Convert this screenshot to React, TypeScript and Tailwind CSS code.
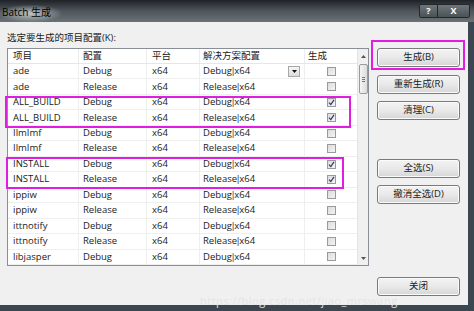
import React from 'react'

type Row = { name: string; config: string; checked: boolean }

const rows: Row[] = [
  { name: 'ade', config: 'Debug', checked: false },
  { name: 'ade', config: 'Release', checked: false },
  { name: 'ALL_BUILD', config: 'Debug', checked: true },
  { name: 'ALL_BUILD', config: 'Release', checked: true },
  { name: 'IlmImf', config: 'Debug', checked: false },
  { name: 'IlmImf', config: 'Release', checked: false },
  { name: 'INSTALL', config: 'Debug', checked: true },
  { name: 'INSTALL', config: 'Release', checked: true },
  { name: 'ippiw', config: 'Debug', checked: false },
  { name: 'ippiw', config: 'Release', checked: false },
  { name: 'ittnotify', config: 'Debug', checked: false },
  { name: 'ittnotify', config: 'Release', checked: false },
  { name: 'libjasper', config: 'Debug', checked: false },
]

const cols = 'grid grid-cols-[71px_68px_53px_105px_52px]'

function CheckBox({ checked }: { checked: boolean }) {
  return (
    <div className="w-[9px] h-[9px] border border-[#9a9a9a] bg-gradient-to-br from-[#dcdcdc] to-[#f4f4f4] flex items-center justify-center">
      {checked && (
        <svg width="7" height="7" viewBox="0 0 7 7">
          <path d="M1 3.6 L2.8 5.6 L6 0.8" fill="none" stroke="#2a3a6a" strokeWidth="1.2" />
        </svg>
      )}
    </div>
  )
}

function Button({ label, className }: { label: string; className?: string }) {
  return (
    <div
      className={`h-[19px] w-[83px] rounded-[3px] border border-[#7a7a7a] bg-gradient-to-b from-[#f3f3f3] via-[#e9e9e9] to-[#d6d6d6] flex items-center justify-center text-[9.5px] text-[#1a1a1a] shadow-[inset_0_0_0_1px_#fbfbfb] ${className ?? ''}`}
    >
      {label}
    </div>
  )
}

export default function App() {
  return (
    <div
      className="w-[474px] h-[311px] overflow-hidden bg-[#3a4650] flex flex-col"
      style={{ fontFamily: '"Open Sans", "Noto Sans CJK SC", sans-serif' }}
    >
      {/* title bar */}
      <div className="h-[22px] bg-gradient-to-b from-[#1f2328] via-[#4f565b] to-[#6b7276] flex items-end justify-between pr-[4px]">
        <div className="pl-[2px] pb-[2px] text-[10px] text-black bg-[radial-gradient(ellipse_at_center,rgba(200,205,208,0.9),rgba(200,205,208,0)_75%)] pr-[10px]">
          Batch 生成
        </div>
        <div className="flex mb-[4px] border border-[#23282c] rounded-[2px] overflow-hidden">
          <div className="w-[18px] h-[12px] bg-gradient-to-b from-[#6f767b] to-[#4b5256] text-white text-[9px] font-bold flex items-center justify-center border-r border-[#23282c]">
            ?
          </div>
          <div className="w-[31px] h-[12px] bg-gradient-to-b from-[#6f767b] to-[#4b5256] text-white text-[9px] font-bold flex items-center justify-center">
            X
          </div>
        </div>
      </div>

      <div className="flex flex-1">
        {/* body */}
        <div className="relative w-[468px] bg-[#f0f0f0] flex pl-[7px] text-[9.5px] text-[#1a1a1a]">
          <div className="flex flex-col w-[362px]">
            <div className="h-[26px] flex items-center pt-[6px]">选定要生成的项目配置(K):</div>
            <div className="h-[218px] border border-[#8a8e96] bg-white flex">
              <div className="w-[349px] flex flex-col">
                <div className={`${cols} h-[15px] border-b border-[#e6e6e6] items-center`}>
                  <div className="pl-[5px] border-r border-[#ececec] h-full flex items-center">项目</div>
                  <div className="pl-[4px] border-r border-[#ececec] h-full flex items-center">配置</div>
                  <div className="pl-[5px] border-r border-[#ececec] h-full flex items-center">平台</div>
                  <div className="pl-[3px] border-r border-[#ececec] h-full flex items-center">解决方案配置</div>
                  <div className="pl-[3px] h-full flex items-center">生成</div>
                </div>
                {rows.map((r, i) => (
                  <div key={i} className={`${cols} h-[15.5px] border-b border-[#efefef] items-center`}>
                    <div className="pl-[5px] border-r border-[#efefef] h-full flex items-center">{r.name}</div>
                    <div className="pl-[4px] border-r border-[#efefef] h-full flex items-center">{r.config}</div>
                    <div className="pl-[5px] border-r border-[#efefef] h-full flex items-center">x64</div>
                    <div className="pl-[3px] border-r border-[#efefef] h-full flex items-center justify-between pr-[4px]">
                      <span>
                        {r.config}
                        <span className="mx-[-1.5px]">|</span>
                        x64
                      </span>
                      {i === 0 && (
                        <div className="w-[12px] h-[11px] border border-[#a8a8a8] bg-gradient-to-b from-[#f6f6f6] to-[#dcdcdc] flex items-center justify-center">
                          <svg width="5" height="3" viewBox="0 0 5 3">
                            <path d="M0 0 H5 L2.5 3 Z" fill="#111" />
                          </svg>
                        </div>
                      )}
                    </div>
                    <div className="h-full flex items-center justify-center">
                      <CheckBox checked={r.checked} />
                    </div>
                  </div>
                ))}
              </div>
              {/* scrollbar */}
              <div className="w-[11px] bg-[#f0f0f0] border-l border-[#e4e4e4] flex flex-col items-center">
                <div className="h-[15px] flex items-center justify-center">
                  <svg width="5" height="3" viewBox="0 0 5 3">
                    <path d="M0 3 H5 L2.5 0 Z" fill="#555" />
                  </svg>
                </div>
                <div className="w-[9px] h-[30px] rounded-[2px] border border-[#9a9a9a] bg-gradient-to-r from-[#f4f4f4] to-[#dcdcdc] flex flex-col items-center justify-center gap-[1px]">
                  <div className="w-[3px] h-px bg-[#777]" />
                  <div className="w-[3px] h-px bg-[#777]" />
                  <div className="w-[3px] h-px bg-[#777]" />
                </div>
                <div className="flex-1" />
                <div className="h-[14px] flex items-center justify-center">
                  <svg width="5" height="3" viewBox="0 0 5 3">
                    <path d="M0 0 H5 L2.5 3 Z" fill="#555" />
                  </svg>
                </div>
              </div>
            </div>
          </div>

          <div className="flex flex-col ml-[8px] pt-[26px]">
            <Button label="生成(B)" />
            <Button label="重新生成(R)" className="mt-[8px]" />
            <Button label="清理(C)" className="mt-[7px]" />
            <Button label="全选(S)" className="mt-[39px]" />
            <Button label="撤消全选(D)" className="mt-[7px]" />
            <Button label="关闭" className="mt-[73px]" />
          </div>

          {/* highlight boxes */}
          <div className="absolute left-[5px] top-[74px] w-[346px] h-[32px] border-2 border-[#e21de2]" />
          <div className="absolute left-[6px] top-[135px] w-[338px] h-[32px] border-2 border-[#e21de2]" />
          <div className="absolute left-[371px] top-[18px] w-[94px] h-[30px] border-2 border-[#e21de2]" />

          {/* watermark */}
          <div className="absolute left-[200px] top-[271px] text-[11px] text-[#e4e4e4] tracking-[0.5px]">
            https://blog.csdn.net/jiao_mrswang
          </div>
        </div>
      </div>
      <div className="h-[6px]" />
    </div>
  )
}
